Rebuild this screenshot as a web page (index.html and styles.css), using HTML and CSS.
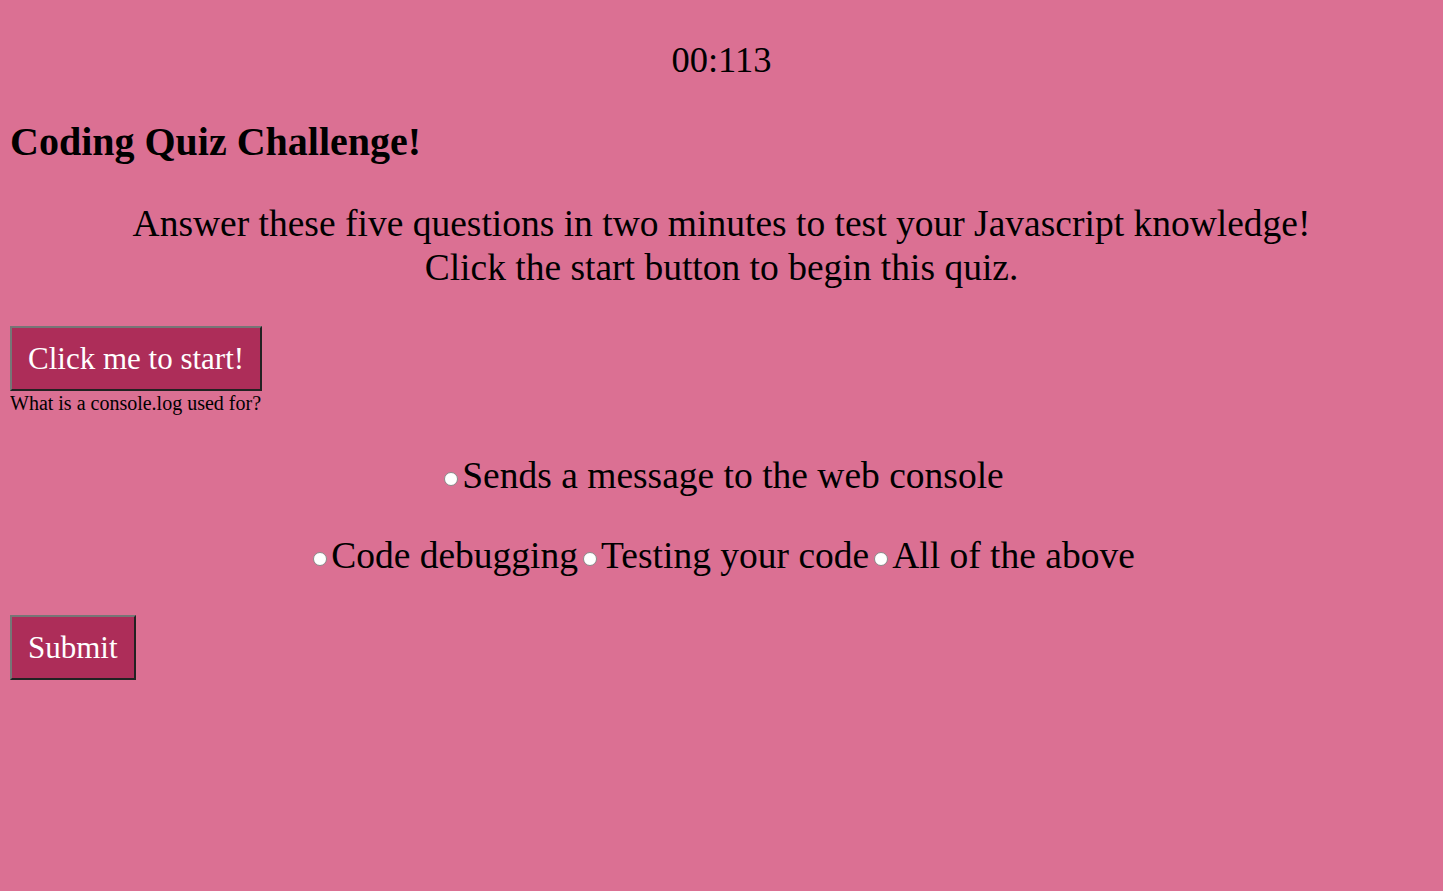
FILE: index.html
```html
<!DOCTYPE html>
<html>
<head>
<meta charset="utf-8">
<link rel="stylesheet" href="styles.css">
</head>
<body>
<div class="timer">00:113</div>
<h1 class="title">Coding Quiz Challenge!</h1>
<p class="intro">Answer these five questions in two minutes to test your Javascript knowledge!<br>Click the start button to begin this quiz.</p>
<button class="btn">Click me to start!</button>
<div class="question">What is a console.log used for?</div>
<div class="answers">
  <p class="row row-first"><input type="radio" name="a" class="radio">Sends a message to the web console</p>
  <p class="row"><input type="radio" name="a" class="radio">Code debugging<input type="radio" name="a" class="radio">Testing your code<input type="radio" name="a" class="radio">All of the above</p>
</div>
<button class="btn">Submit</button>
</body>
</html>
```
FILE: styles.css
```css
html, body {
  background: #db7093;
}
body {
  margin: 10px;
  font-family: "Liberation Serif", serif;
  color: #000;
}
.timer {
  text-align: center;
  font-size: 36.5px;
  line-height: 42px;
  margin-top: 29px;
}
.title {
  font-size: 40px;
  line-height: 46px;
  font-weight: bold;
  margin: 38px 0 37px;
}
.intro {
  text-align: center;
  font-size: 37.5px;
  line-height: 44px;
  margin: 0 0 36px;
}
.btn {
  font-family: "Liberation Serif", serif;
  font-size: 31px;
  line-height: 37px;
  color: #fff;
  background: #ad2d59;
  border: 2px solid;
  border-color: #767676 #222 #222 #767676;
  padding: 12px 16px;
  margin: 0;
  display: block;
}
.question {
  font-size: 20px;
  line-height: 23px;
  margin-top: 1px;
}
.answers {
  text-align: center;
  font-size: 37.5px;
  line-height: 43px;
  padding-top: 1px;
}
.row {
  margin: 37.5px 0;
}
.row-first {
  margin-top: 37.5px;
}
.radio {
  -webkit-appearance: none;
  appearance: none;
  box-sizing: border-box;
  margin: 0 4px 0 5px;
  width: 14px;
  height: 14px;
  border: 1px solid #8a8a8a;
  border-radius: 50%;
  background: #fff;
  vertical-align: middle;
}
```
